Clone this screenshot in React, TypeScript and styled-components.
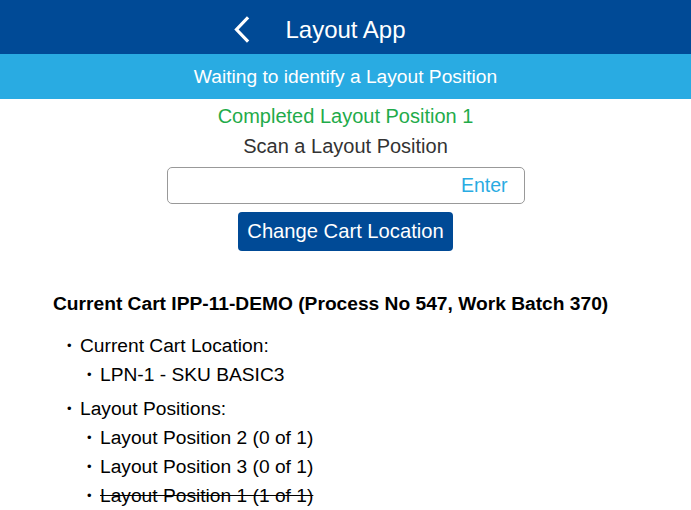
import React from "react";
import styled, { createGlobalStyle } from "styled-components";

const Global = createGlobalStyle`
  html, body { margin: 0; padding: 0; background: #fff; }
  body { font-family: "Liberation Sans", Arial, sans-serif; }
  * { box-sizing: border-box; }
`;

const Page = styled.div`
  width: 691px;
  min-height: 510px;
  display: flex;
  flex-direction: column;
`;

const Header = styled.header`
  height: 54px;
  background: #004a96;
  color: #fff;
  display: grid;
  grid-template-columns: 1fr auto 1fr;
  align-items: center;
  column-gap: 35px;
  padding-top: 5px;
`;

const Title = styled.h1`
  margin: 0;
  font-size: 24px;
  font-weight: 400;
  color: #fff;
`;

const BackButton = styled.button`
  justify-self: end;
  background: none;
  border: 0;
  padding: 0;
  display: flex;
  align-items: center;
  cursor: pointer;
`;

const Banner = styled.div`
  height: 45px;
  background: #29abe2;
  color: #fff;
  font-size: 19.2px;
  display: flex;
  align-items: center;
  justify-content: center;
`;

const Center = styled.section`
  display: flex;
  flex-direction: column;
  align-items: center;
  padding-top: 2px;
`;

const Status = styled.div<{ $tone: "success" | "normal" }>`
  font-size: 20px;
  line-height: 30px;
  color: ${(p) => (p.$tone === "success" ? "#1fab4a" : "#333")};
`;

const InputBox = styled.div`
  margin-top: 6px;
  width: 358px;
  height: 37px;
  border: 1px solid #999;
  border-radius: 5px;
  display: flex;
  align-items: center;
  justify-content: flex-end;
  padding-right: 16px;
`;

const Field = styled.input`
  flex: 1;
  border: 0;
  outline: none;
  height: 100%;
  background: transparent;
  padding-left: 10px;
  font-size: 18px;
  font-family: inherit;
`;

const EnterLabel = styled.span`
  color: #29abe2;
  font-size: 19.5px;
`;

const PrimaryButton = styled.button`
  margin-top: 8px;
  height: 39px;
  padding: 0 9px;
  background: #004a96;
  color: #fff;
  border: 0;
  border-radius: 4px;
  font-family: inherit;
  font-size: 20.2px;
`;

const Details = styled.section`
  padding: 42px 0 0 53px;
`;

const Heading = styled.h2`
  margin: 0 0 16px 0;
  font-size: 19.2px;
  line-height: 22px;
  font-weight: 700;
  color: #000;
`;

const List = styled.ul<{ $nested?: boolean }>`
  list-style: none;
  margin: 0;
  padding: 0 0 0 ${(p) => (p.$nested ? "20px" : "14px")};
`;

const Item = styled.li<{ $group?: boolean }>`
  font-size: 19.2px;
  line-height: 29px;
  color: #000;
  margin-bottom: ${(p) => (p.$group ? "5px" : "0")};
  &::before {
    content: "•";
    display: inline-block;
    width: 13px;
    font-size: 13px;
    vertical-align: 2px;
  }
`;

const Text = styled.span<{ $done?: boolean }>`
  text-decoration: ${(p) => (p.$done ? "line-through" : "none")};
`;

export default function App() {
  return (
    <Page>
      <Global />
      <Header>
        <BackButton aria-label="Back">
          <svg width="17" height="27" viewBox="0 0 17 27">
            <path d="M14 2.5 L3.5 13.5 L14 24.5" fill="none" stroke="#fff" strokeWidth="3.2" strokeLinecap="square" />
          </svg>
        </BackButton>
        <Title>Layout App</Title>
        <span />
      </Header>
      <Banner>Waiting to identify a Layout Position</Banner>
      <Center>
        <Status $tone="success">Completed Layout Position 1</Status>
        <Status $tone="normal">Scan a Layout Position</Status>
        <InputBox>
          <Field />
          <EnterLabel>Enter</EnterLabel>
        </InputBox>
        <PrimaryButton>Change Cart Location</PrimaryButton>
      </Center>
      <Details>
        <Heading>Current Cart IPP-11-DEMO (Process No 547, Work Batch 370)</Heading>
        <List>
          <Item $group>
            Current Cart Location:
            <List $nested>
              <Item>LPN-1 - SKU BASIC3</Item>
            </List>
          </Item>
          <Item>
            Layout Positions:
            <List $nested>
              <Item>Layout Position 2 (0 of 1)</Item>
              <Item>Layout Position 3 (0 of 1)</Item>
              <Item>
                <Text $done>Layout Position 1 (1 of 1)</Text>
              </Item>
            </List>
          </Item>
        </List>
      </Details>
    </Page>
  );
}
